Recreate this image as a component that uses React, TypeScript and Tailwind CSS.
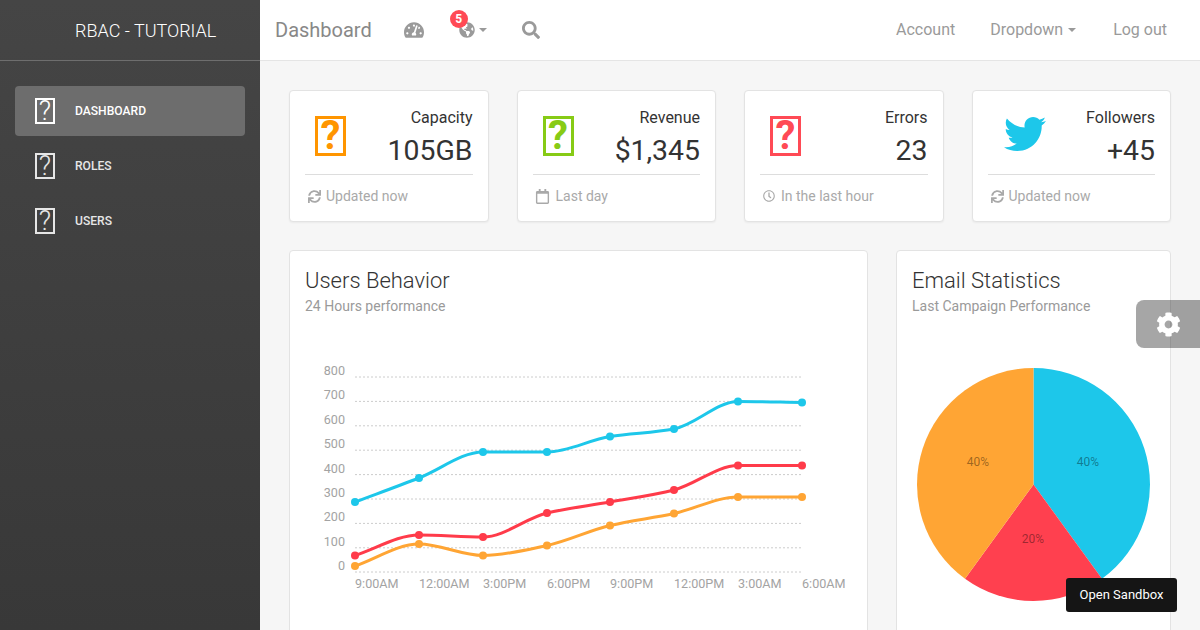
import type { ReactNode } from "react";
import {
  FaCog,
  FaGlobeAmericas,
  FaRegCalendar,
  FaRegClock,
  FaSearch,
  FaSync,
  FaTachometerAlt,
  FaTwitter,
} from "react-icons/fa";

type Pt = [number, number];

const NAV_ITEMS = ["Dashboard", "Roles", "Users"];

const GRID_Y = [377, 401.4, 425.8, 450.2, 474.6, 499, 523.4, 547.8, 572];
const Y_LABELS = ["800", "700", "600", "500", "400", "300", "200", "100", "0"];
const X_LABELS = [
  { x: 355, t: "9:00AM" },
  { x: 419, t: "12:00AM" },
  { x: 483, t: "3:00PM" },
  { x: 547, t: "6:00PM" },
  { x: 610, t: "9:00PM" },
  { x: 674, t: "12:00PM" },
  { x: 738, t: "3:00AM" },
  { x: 802, t: "6:00AM" },
];

const SERIES: { color: string; ys: number[] }[] = [
  { color: "#1dc7ea", ys: [502, 478, 452, 452, 436.5, 429, 401.5, 402.5] },
  { color: "#ff3b4a", ys: [555.5, 535, 537, 513, 502, 490, 465.5, 465.5] },
  { color: "#ffa534", ys: [566, 544, 555.5, 545.5, 525.5, 513.5, 497, 497] },
];

// origin of the chart svg inside the page, data above is in page pixels
const CHART_X = 290;
const CHART_Y = 340;

// monotone cubic, so flat runs stay flat instead of dipping
function smoothPath(pts: Pt[]) {
  const n = pts.length;
  const slopes: number[] = [];
  for (let i = 0; i < n - 1; i++) {
    slopes.push((pts[i + 1][1] - pts[i][1]) / (pts[i + 1][0] - pts[i][0]));
  }
  const tangents = pts.map((_, i) => {
    if (i === 0) return slopes[0];
    if (i === n - 1) return slopes[n - 2];
    const a = slopes[i - 1];
    const b = slopes[i];
    if (a * b <= 0) return 0;
    return (2 * a * b) / (a + b);
  });
  let d = `M${pts[0][0]},${pts[0][1]}`;
  for (let i = 0; i < n - 1; i++) {
    const dx = (pts[i + 1][0] - pts[i][0]) / 3;
    d += ` C${pts[i][0] + dx},${pts[i][1] + tangents[i] * dx} ${pts[i + 1][0] - dx},${
      pts[i + 1][1] - tangents[i + 1] * dx
    } ${pts[i + 1][0]},${pts[i + 1][1]}`;
  }
  return d;
}

function MissingGlyph({ className, mark }: { className: string; mark: string }) {
  return (
    <span className={`flex items-center justify-center ${className}`}>
      <span className={mark}>?</span>
    </span>
  );
}

function StatCard({
  icon,
  label,
  value,
  footIcon,
  foot,
}: {
  icon: ReactNode;
  label: string;
  value: string;
  footIcon: ReactNode;
  foot: string;
}) {
  return (
    <div className="h-[132px] rounded-[4px] border border-[#e3e3e3] bg-white px-[15px] shadow-[0_1px_2px_rgba(0,0,0,0.05)]">
      <div className="flex h-[84px] items-center justify-between border-b border-[#dddddd]">
        <div className="pt-[6px]">{icon}</div>
        <div className="pt-[13px] text-right">
          <p className="text-[16px] leading-[24px] text-[#333333]">{label}</p>
          <p className="text-[28.4px] leading-[42px] text-[#333333]">{value}</p>
        </div>
      </div>
      <div className="flex h-[42px] items-center gap-[6px] pl-[3px] text-[14px] text-[#a9a9a9]">
        {footIcon}
        <span>{foot}</span>
      </div>
    </div>
  );
}

function LineChart() {
  return (
    <svg width="570" height="260" viewBox={`${CHART_X} ${CHART_Y} 570 260`} className="block">
      {GRID_Y.map((y, i) => (
        <g key={y}>
          <line x1="355" x2="802" y1={y} y2={y} stroke="#cccccc" strokeWidth="1" strokeDasharray="2 2" />
          <text x="345" y={y - 2} textAnchor="end" fontSize="12.6" fill="#a3a3a3">
            {Y_LABELS[i]}
          </text>
        </g>
      ))}
      {X_LABELS.map((l) => (
        <text key={l.t} x={l.x} y="588" fontSize="12.6" fill="#a3a3a3">
          {l.t}
        </text>
      ))}
      {SERIES.map((s) => {
        const pts = s.ys.map((y, i): Pt => [X_LABELS[i].x, y]);
        return (
          <g key={s.color}>
            <path d={smoothPath(pts)} fill="none" stroke={s.color} strokeWidth="3" />
            {pts.map((p) => (
              <circle key={p[0]} cx={p[0]} cy={p[1]} r="4" fill={s.color} />
            ))}
          </g>
        );
      })}
    </svg>
  );
}

function PieChart() {
  const cx = 121.5;
  const cy = 119.5;
  const r = 116.5;
  const at = (pct: number): Pt => {
    const a = (pct / 100) * Math.PI * 2 - Math.PI / 2;
    return [cx + r * Math.cos(a), cy + r * Math.sin(a)];
  };
  const slice = (from: number, to: number) => {
    const a = at(from);
    const b = at(to);
    return `M${cx},${cy} L${a[0]},${a[1]} A${r},${r} 0 0 1 ${b[0]},${b[1]} Z`;
  };
  return (
    <svg width="243" height="240" viewBox="0 0 243 240" className="block">
      <path d={slice(0, 40)} fill="#1dc7ea" />
      <path d={slice(40, 60)} fill="#ff404f" />
      <path d={slice(60, 100)} fill="#ffa534" />
      <g fontSize="12" fill="rgba(0,0,0,0.4)" textAnchor="middle">
        <text x="176" y="101">40%</text>
        <text x="121" y="178">20%</text>
        <text x="66" y="101">40%</text>
      </g>
    </svg>
  );
}

export default function App() {
  return (
    <div className="relative flex h-[630px] w-[1200px] overflow-hidden bg-[#f6f6f6] font-['Roboto',sans-serif]">
      <aside className="w-[260px] shrink-0 bg-linear-to-b from-[#454545] to-[#383838] text-white">
        <div className="flex h-[61px] items-center border-b border-[#6e6e6e] pl-[75px] text-[18px] font-light text-white">
          RBAC - TUTORIAL
        </div>
        <nav className="flex flex-col gap-[5px] px-[15px] pt-[25px]">
          {NAV_ITEMS.map((label, i) => (
            <div
              key={label}
              className={`flex h-[50px] items-center gap-[20px] rounded-[4px] pl-[20px] text-[12.1px] font-medium uppercase ${
                i === 0 ? "bg-[#6d6d6d] text-white" : "text-[#e6e6e6]"
              }`}
            >
              <MissingGlyph
                className="h-[26px] w-[20px] border-2 border-current"
                mark="text-[27px] font-light leading-[22px]"
              />
              <span>{label}</span>
            </div>
          ))}
        </nav>
      </aside>

      <div className="min-w-0 flex-1">
        <header className="flex h-[61px] items-center border-b border-[#e5e5e5] bg-white pl-[15px] pr-[33px] text-[#9a9a9a]">
          <span className="text-[20px] text-[#888888]">Dashboard</span>
          <FaTachometerAlt className="ml-[32px] text-[20px]" />
          <div className="relative ml-[35px] flex items-center gap-[4px]">
            <FaGlobeAmericas className="text-[16px]" />
            <span className="h-0 w-0 border-x-[4px] border-t-[4px] border-x-transparent border-t-[#9a9a9a]" />
            <span className="absolute -left-[9px] -top-[12px] flex h-[18px] w-[18px] items-center justify-center rounded-full bg-[#ff4a55] text-[12px] font-bold text-white">
              5
            </span>
          </div>
          <FaSearch className="ml-[35px] text-[18px]" />
          <div className="ml-auto flex items-center text-[16px]">
            <span>Account</span>
            <span className="ml-[35px] flex items-center gap-[5px]">
              Dropdown
              <span className="h-0 w-0 border-x-[4px] border-t-[4px] border-x-transparent border-t-[#9a9a9a]" />
            </span>
            <span className="ml-[37px]">Log out</span>
          </div>
        </header>

        <main className="px-[29px] pt-[29px]">
          <div className="grid grid-cols-4 gap-x-[28px]">
            <StatCard
              icon={<MissingGlyph className="ml-[10px] h-[40px] w-[31px] border-[3px] border-[#ff9500] text-[#ff9500]" mark="text-[40px] font-bold leading-[34px]" />}
              label="Capacity"
              value="105GB"
              footIcon={<FaSync className="-mr-px text-[13px]" />}
              foot="Updated now"
            />
            <StatCard
              icon={<MissingGlyph className="ml-[10px] h-[40px] w-[31px] border-[3px] border-[#87cb16] text-[#87cb16]" mark="text-[40px] font-bold leading-[34px]" />}
              label="Revenue"
              value="$1,345"
              footIcon={<FaRegCalendar className="-ml-px text-[15px]" />}
              foot="Last day"
            />
            <StatCard
              icon={<MissingGlyph className="ml-[10px] h-[40px] w-[31px] border-[3px] border-[#ff4a55] text-[#ff4a55]" mark="text-[40px] font-bold leading-[34px]" />}
              label="Errors"
              value="23"
              footIcon={<FaRegClock className="text-[12px]" />}
              foot="In the last hour"
            />
            <StatCard
              icon={<FaTwitter className="-mt-[4px] ml-[16px] text-[42px] text-[#1dc7ea]" />}
              label="Followers"
              value="+45"
              footIcon={<FaSync className="-mr-px text-[13px]" />}
              foot="Updated now"
            />
          </div>

          <div className="mt-[28px] grid grid-cols-[1fr_275px] gap-x-[28px]">
            <section className="h-[420px] rounded-[4px] border border-[#e3e3e3] bg-white">
              <div className="px-[15px] pt-[15px]">
                <h2 className="text-[22px] font-light leading-[30px] text-[#333333]">Users Behavior</h2>
                <p className="text-[14px] leading-[20px] text-[#9a9a9a]">24 Hours performance</p>
              </div>
              <div className="mt-[24px]">
                <LineChart />
              </div>
            </section>
            <section className="h-[420px] rounded-[4px] border border-[#e3e3e3] bg-white">
              <div className="px-[15px] pt-[15px]">
                <h2 className="text-[22px] font-light leading-[30px] text-[#333333]">Email Statistics</h2>
                <p className="text-[14px] leading-[20px] text-[#9a9a9a]">Last Campaign Performance</p>
              </div>
              <div className="mt-[49px] pl-[15px]">
                <PieChart />
              </div>
            </section>
          </div>
        </main>
      </div>

      <div className="absolute right-0 top-[300px] flex h-[48px] w-[64px] items-center justify-center rounded-l-[8px] bg-[rgba(0,0,0,0.35)] text-[25px] text-white">
        <FaCog />
      </div>
      <div className="absolute left-[1066px] top-[578px] flex h-[34px] w-[111px] items-center justify-center rounded-[3px] bg-[#151515] text-[13px] text-white">
        Open Sandbox
      </div>
    </div>
  );
}
